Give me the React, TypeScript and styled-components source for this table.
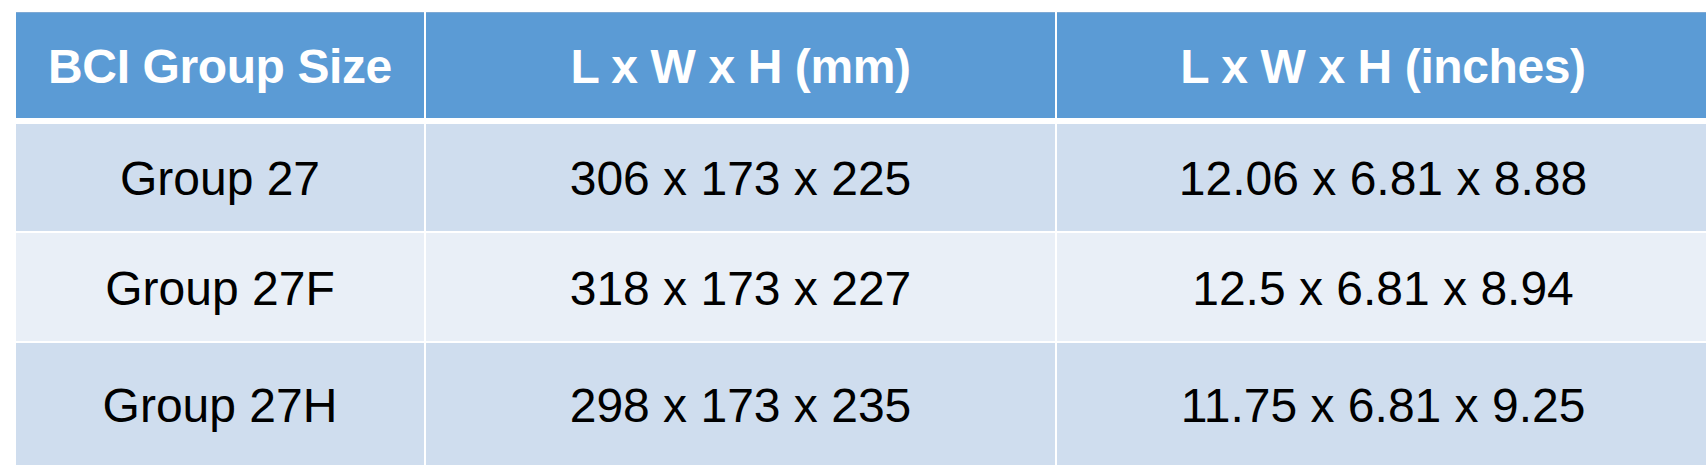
import React from 'react';
import styled, { createGlobalStyle } from 'styled-components';

interface ISizeRow {
    group: string;
    mm: string;
    inches: string;
    height: number;
}

const GlobalStyle = createGlobalStyle`
    html, body {
        margin: 0;
        padding: 0;
        background: #ffffff;
        overflow: hidden;
    }
`;

const Page = styled.div`
    width: 1706px;
    height: 474px;
    box-sizing: border-box;
    padding: 12px 0 0 16px;
    overflow: hidden;
    font-family: "Liberation Sans", Arial, sans-serif;
`;

const Grid = styled.div`
    display: grid;
    grid-template-columns: 408px 629px 652px;
    column-gap: 2px;
    row-gap: 2px;
    width: 1693px;
`;

const HeadCell = styled.div`
    height: 106px;
    margin-bottom: 4px;
    display: flex;
    align-items: center;
    justify-content: center;
    background: #5b9bd5;
    border-top: 1px solid #7ea9d4;
    box-sizing: border-box;
    color: #ffffff;
    font-size: 48px;
    font-weight: 700;
    letter-spacing: -0.4px;
    padding-top: 2px;
`;

const Cell = styled.div<{ $odd: boolean; $height: number }>`
    height: ${(p) => p.$height}px;
    display: flex;
    align-items: center;
    justify-content: center;
    background: ${(p) => (p.$odd ? '#cfddee' : '#e9eff7')};
    color: #000000;
    font-size: 48px;
    padding-top: 2px;
    box-sizing: border-box;
`;

const rows: ISizeRow[] = [
    { group: 'Group 27', mm: '306 x 173 x 225', inches: '12.06 x 6.81 x 8.88', height: 107 },
    { group: 'Group 27F', mm: '318 x 173 x 227', inches: '12.5 x 6.81 x 8.94', height: 108 },
    { group: 'Group 27H', mm: '298 x 173 x 235', inches: '11.75 x 6.81 x 9.25', height: 122 },
];

const App = () => {
    return (
        <Page>
            <GlobalStyle />
            <Grid>
                <HeadCell>BCI Group Size</HeadCell>
                <HeadCell>L x W x H (mm)</HeadCell>
                <HeadCell>L x W x H (inches)</HeadCell>
                {rows.map((row, i) => (
                    <React.Fragment key={row.group}>
                        <Cell $odd={i % 2 === 0} $height={row.height}>{row.group}</Cell>
                        <Cell $odd={i % 2 === 0} $height={row.height}>{row.mm}</Cell>
                        <Cell $odd={i % 2 === 0} $height={row.height}>{row.inches}</Cell>
                    </React.Fragment>
                ))}
            </Grid>
        </Page>
    );
};

export default App;
